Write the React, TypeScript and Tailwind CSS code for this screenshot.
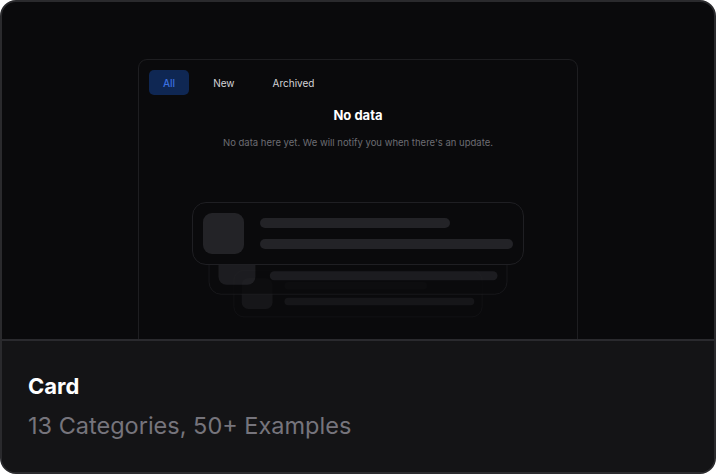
import React from "react";

function SkeletonCard({ className = "" }: { className?: string }) {
  return (
    <div
      className={`flex items-center gap-4 rounded-[14px] border border-[#1f1f23] bg-[#0a0a0c] p-[10px] ${className}`}
    >
      <div className="w-[41px] h-[41px] shrink-0 rounded-[9px] bg-[#232327]" />
      <div className="flex-1 flex flex-col gap-[11px]">
        <div className="h-[10px] w-[190px] rounded-full bg-[#232327]" />
        <div className="h-[10px] w-full rounded-full bg-[#232327]" />
      </div>
    </div>
  );
}

export default function App() {
  const tabs = ["All", "New", "Archived"];
  return (
    <div className="w-[716px] h-[474px] bg-white font-['Inter',sans-serif]">
      <div className="w-full h-full flex flex-col overflow-hidden rounded-[16px] border-2 border-[#2a2a2d] bg-[#0a0a0c]">
        <div className="h-[337px] shrink-0 flex justify-center pt-[57px] overflow-hidden">
          <div className="w-[440px] h-[300px] shrink-0 rounded-[9px] border border-[#1e1e21] px-[10px] pt-[10px] flex flex-col items-center">
            <div className="self-stretch flex gap-[10px]">
              {tabs.map((t, i) => (
                <button
                  key={t}
                  className={`h-[25px] px-[14px] rounded-[5px] text-[10px] leading-none ${
                    i === 0
                      ? "bg-[#0f2753] text-[#3b6fdf] font-medium"
                      : "text-[#d4d4d8]"
                  }`}
                >
                  {t}
                </button>
              ))}
            </div>
            <h2 className="mt-[12px] text-[13px] leading-[16px] font-bold text-white">
              No data
            </h2>
            <p className="mt-[14px] text-[9.5px] leading-[12px] text-[#6d6d73]">
              No data here yet. We will notify you when there's an update.
            </p>
            <div className="relative mt-[53px] w-[332px]">
              <SkeletonCard className="absolute left-0 top-[36px] w-full scale-75 origin-top opacity-50 translate-y-[32px]" />
              <SkeletonCard className="absolute left-0 top-[36px] w-full scale-90 origin-top opacity-75" />
              <SkeletonCard className="relative" />
            </div>
          </div>
        </div>
        <div className="h-[2px] shrink-0 bg-[#2a2a2e]" />
        <div className="flex-1 bg-[#141416] pl-[26px] pt-[31px]">
          <div className="text-[22px] leading-[28px] font-bold text-white">Card</div>
          <div className="mt-[11px] text-[23.5px] leading-[30px] text-[#76747c]">
            13 Categories, 50+ Examples
          </div>
        </div>
      </div>
    </div>
  );
}
